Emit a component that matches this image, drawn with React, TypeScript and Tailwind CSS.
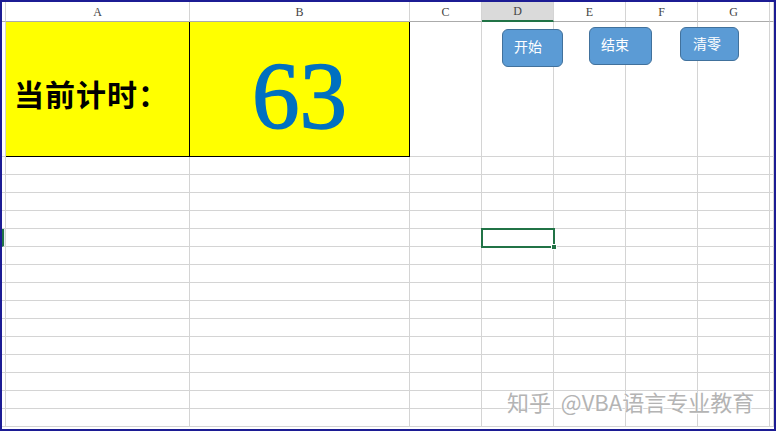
import React from "react";

const cols = [
  { key: "rh", w: "w-[4px]", label: "" },
  { key: "A", w: "w-[184px]", label: "A" },
  { key: "B", w: "w-[220px]", label: "B" },
  { key: "C", w: "w-[72px]", label: "C" },
  { key: "D", w: "w-[72px]", label: "D" },
  { key: "E", w: "w-[72px]", label: "E" },
  { key: "F", w: "w-[72px]", label: "F" },
  { key: "G", w: "w-[72px]", label: "G" },
  { key: "H", w: "w-[4px]", label: "" },
];

const rows = Array.from({ length: 15 }, (_, i) => i + 2);

const serif = { fontFamily: '"Liberation Serif", "DejaVu Serif", serif' };
const cjk = { fontFamily: '"Noto Sans CJK SC", "Noto Sans", sans-serif' };

const Button: React.FC<{ label: string; className: string }> = ({ label, className }) => (
  <div
    className={`absolute rounded-[6px] border border-[#41719c] bg-[#5b9bd5] text-[14px] leading-none text-white ${className}`}
    style={cjk}
  >
    {label}
  </div>
);

export default function App() {
  return (
    <div className="relative h-[431px] w-[776px] overflow-hidden border-2 border-[#1c1c94] bg-white">
      {/* column header */}
      <div className="flex h-[20px]">
        {cols.map((c) => (
          <div
            key={c.key}
            className={`${c.w} flex shrink-0 items-center justify-center border-r border-[#d4d4d4] text-[12px] text-[#444] ${
              c.key === "D"
                ? "border-b-2 border-b-[#217346] bg-[#dadada]"
                : "border-b border-b-[#ababab]"
            }`}
            style={serif}
          >
            {c.label}
          </div>
        ))}
      </div>

      {/* row 1: merged yellow cells */}
      <div className="flex h-[135px]">
        <div className="w-[4px] shrink-0 border-r border-b border-[#d4d4d4]" />
        <div
          className="flex w-[184px] shrink-0 items-center border-r border-b border-black bg-[#ffff00] pl-[8px] pt-[8px] text-[30px] font-bold tracking-[1px] text-black"
          style={cjk}
        >
          当前计时：
        </div>
        <div
          className="flex w-[220px] shrink-0 items-center justify-center border-r border-b border-black bg-[#ffff00] pt-[14px] text-[95px] leading-none text-[#0070c0] [-webkit-text-stroke:1.5px_#0070c0]"
          style={serif}
        >
          63
        </div>
        {cols.slice(3).map((c) => (
          <div key={c.key} className={`${c.w} shrink-0 border-r border-b border-[#d4d4d4]`} />
        ))}
      </div>

      {/* remaining rows */}
      {rows.map((r) => (
        <div key={r} className="flex h-[18px]">
          {cols.map((c) => (
            <div
              key={c.key}
              className={`${c.w} shrink-0 border-r border-b border-[#d4d4d4] ${
                c.key === "rh" && r === 6 ? "border-l-[2px] border-l-[#217346] bg-[#e4ecf4]" : ""
              }`}
            />
          ))}
        </div>
      ))}

      {/* active cell D6 */}
      <div className="absolute left-[479px] top-[226px] h-[20px] w-[74px] border-2 border-[#217346]" />
      <div className="absolute left-[549px] top-[242px] h-[6px] w-[6px] border border-white bg-[#217346]" />

      {/* buttons */}
      <Button label="开始" className="left-[500px] top-[27px] h-[38px] w-[61px] pl-[11px] pt-[9px]" />
      <Button label="结束" className="left-[587px] top-[25px] h-[38px] w-[63px] pl-[11px] pt-[9px]" />
      <Button label="清零" className="left-[678px] top-[25px] h-[34px] w-[59px] pl-[12px] pt-[8px]" />

      {/* watermark */}
      <div
        className="absolute left-[505px] top-[383px] whitespace-nowrap text-[22px] text-[#b4b4b4]"
        style={{
          ...cjk,
          textShadow: "0 0 2px #fff, 0 0 2px #fff, 1px 1px 1px #fff",
        }}
      >
        知乎&nbsp;&nbsp;@VBA语言专业教育
      </div>
    </div>
  );
}
